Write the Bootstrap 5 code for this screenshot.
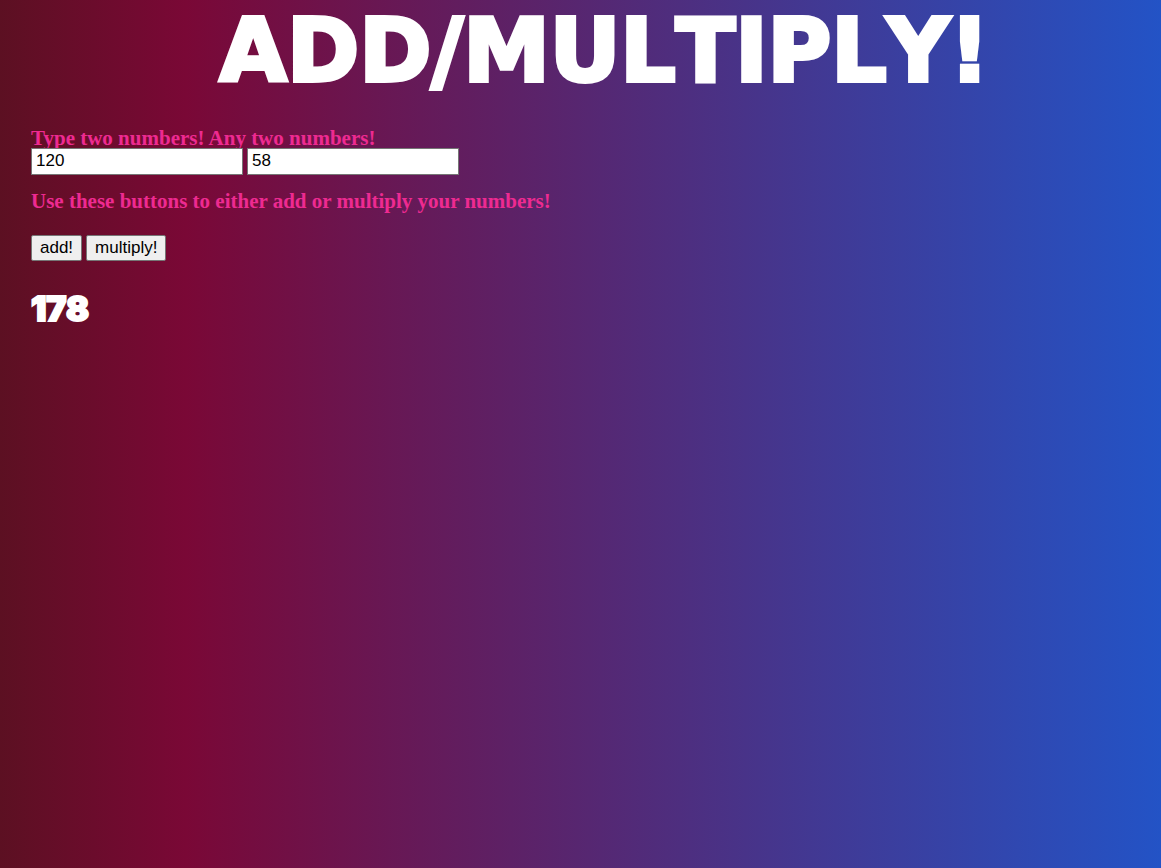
<!DOCTYPE html>
<html lang="en">
<head>
<meta charset="utf-8">
<meta name="viewport" content="width=device-width, initial-scale=1">
<title>Add/Multiply!</title>
<link href="https://cdn.jsdelivr.net/npm/bootstrap@5.3.0/dist/css/bootstrap.min.css" rel="stylesheet">
<style>
body { background: linear-gradient(90deg, #5c1022 0%, #7a0836 16%, #2353c6 100%); }
main { padding: 0 16px 0 31px; }
.display-title { font: 700 87px/102px "DejaVu Sans", sans-serif; font-kerning: none; margin: 0; padding: 0 0 18px 48px; -webkit-text-stroke: 4px #fff; }
.prompt { font: 700 21px/20px "Liberation Serif", serif; color: #ee2a91; }
.number-box, .action-btn { font: 17px/20px "Liberation Sans", sans-serif; color: #000; border: 1px solid #767676; }
.number-box { width: 212px; height: 27px; padding: 0 4px 2px; background: #fff; border-radius: 0; }
.action-btn { height: 26px; padding: 0 8px 1px; background: #efefef; border-radius: 2px; }
.answer { font: 900 34px/48px Inter, sans-serif; -webkit-text-stroke: 2px #fff; }
</style>
</head>
<body class="min-vh-100">
<h1 class="display-title text-white text-center">ADD/MULTIPLY!</h1>
<main class="pt-2">
  <label class="prompt d-block" for="first">Type two numbers! Any two numbers!</label>
  <div class="d-flex flex-wrap gap-1 mb-3">
    <input class="number-box" id="first" type="text" value="120">
    <input class="number-box" type="text" value="58" aria-label="Second number">
  </div>
  <p class="prompt mb-4">Use these buttons to either add or multiply your numbers!</p>
  <div class="d-flex gap-1 mb-4">
    <button class="action-btn" type="button">add!</button>
    <button class="action-btn" type="button">multiply!</button>
  </div>
  <output class="answer d-block text-white" for="first">178</output>
</main>
<script src="https://cdn.jsdelivr.net/npm/bootstrap@5.3.0/dist/js/bootstrap.bundle.min.js"></script>
</body>
</html>
